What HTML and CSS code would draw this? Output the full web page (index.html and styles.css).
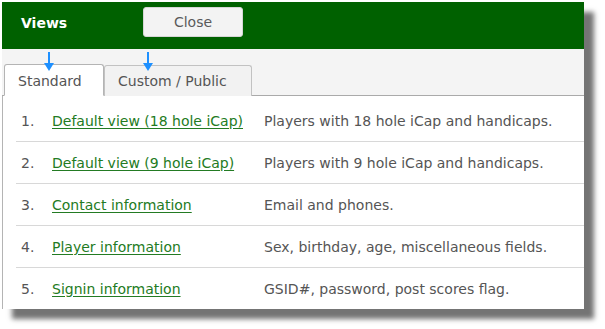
FILE: index.html
```html
<!DOCTYPE html>
<html lang="en">
<head>
    <meta charset="UTF-8">
    <title>Views</title>
    <link rel="stylesheet" href="styles.css">
</head>
<body>

<div class="dialog">
    <div class="header">
        <span class="title">Views</span>
        <button class="close-button">Close</button>
    </div>

    <div class="tabs">
        <div class="tab active">Standard</div>
        <div class="tab">Custom / Public</div>
        <!-- annotation arrows -->
        <span class="arrow arrow-standard"></span>
        <span class="arrow arrow-custom"></span>
    </div>

    <div class="view-list">
        <div class="view-row">
            <span class="num">1.</span>
            <a href="#" class="view-link">Default view (18 hole iCap)</a>
            <span class="desc">Players with 18 hole iCap and handicaps.</span>
        </div>
        <div class="view-row">
            <span class="num">2.</span>
            <a href="#" class="view-link">Default view (9 hole iCap)</a>
            <span class="desc">Players with 9 hole iCap and handicaps.</span>
        </div>
        <div class="view-row">
            <span class="num">3.</span>
            <a href="#" class="view-link">Contact information</a>
            <span class="desc">Email and phones.</span>
        </div>
        <div class="view-row">
            <span class="num">4.</span>
            <a href="#" class="view-link">Player information</a>
            <span class="desc">Sex, birthday, age, miscellaneous fields.</span>
        </div>
        <div class="view-row">
            <span class="num">5.</span>
            <a href="#" class="view-link">Signin information</a>
            <span class="desc">GSID#, password, post scores flag.</span>
        </div>
    </div>
</div>

</body>
</html>
```

FILE: styles.css
```css
body {
    margin: 0;
    padding: 2px;
    height: 329px;
    box-sizing: border-box;
    background: #ffffff;
    font-family: "DejaVu Sans", Verdana, sans-serif;
    font-size: 14px;
    color: #555555;
}

.dialog {
    width: 582px;
    height: 307px;
    background: #ffffff;
    box-shadow: 10px 10px 5px #747474;
    overflow: hidden;
}

.header {
    height: 47px;
    background: #006100;
    display: flex;
    align-items: flex-start;
}

.title {
    color: #ffffff;
    font-weight: bold;
    font-size: 14px;
    margin: 13px 0 0 19px;
    width: 122px;
}

.close-button {
    margin-top: 5px;
    width: 100px;
    height: 30px;
    background: #f3f3f3;
    border: 1px solid #d6d6d6;
    border-radius: 3px;
    color: #5a5a5a;
    font-family: "DejaVu Sans", Verdana, sans-serif;
    font-size: 14px;
    padding: 0;
}

.tabs {
    position: relative;
    height: 46px;
    background: #f4f4f4;
    border-bottom: 1px solid #aaaaaa;
    display: flex;
    align-items: flex-end;
    padding-left: 2px;
}

.tab {
    width: 148px;
    height: 31px;
    line-height: 31px;
    padding: 0 13px;
    border: 1px solid #c2c2c2;
    border-bottom: none;
    border-radius: 3px 3px 0 0;
    background: #f2f2f2;
    color: #555555;
    font-size: 14px;
    margin-bottom: -1px;
    box-sizing: border-box;
}

.tab.active {
    width: 100px;
    height: 32px;
    line-height: 32px;
    background: #ffffff;
    border-color: #b4b4b4;
    border-bottom: 1px solid #ffffff;
}

.arrow {
    position: absolute;
    top: 3px;
    width: 2px;
    height: 12px;
    background: #1e90ff;
}

.arrow::after {
    content: "";
    position: absolute;
    left: -4px;
    top: 11px;
    border-left: 5px solid transparent;
    border-right: 5px solid transparent;
    border-top: 8px solid #1e90ff;
}

.arrow-standard {
    left: 46px;
}

.arrow-custom {
    left: 145px;
}

.view-list {
    border-left: 1px solid #b4b4b4;
    padding: 4px 0 0 13px;
    height: 213px;
}

.view-row {
    display: flex;
    align-items: center;
    height: 41px;
    border-bottom: 1px solid #d8d8d8;
    padding-left: 5px;
}

.view-row:last-child {
    border-bottom: none;
}

.num {
    width: 31px;
    color: #555555;
}

.view-link {
    width: 212px;
    color: #237b23;
    text-decoration: underline;
    text-underline-offset: 2px;
}

.desc {
    color: #555555;
}
```
